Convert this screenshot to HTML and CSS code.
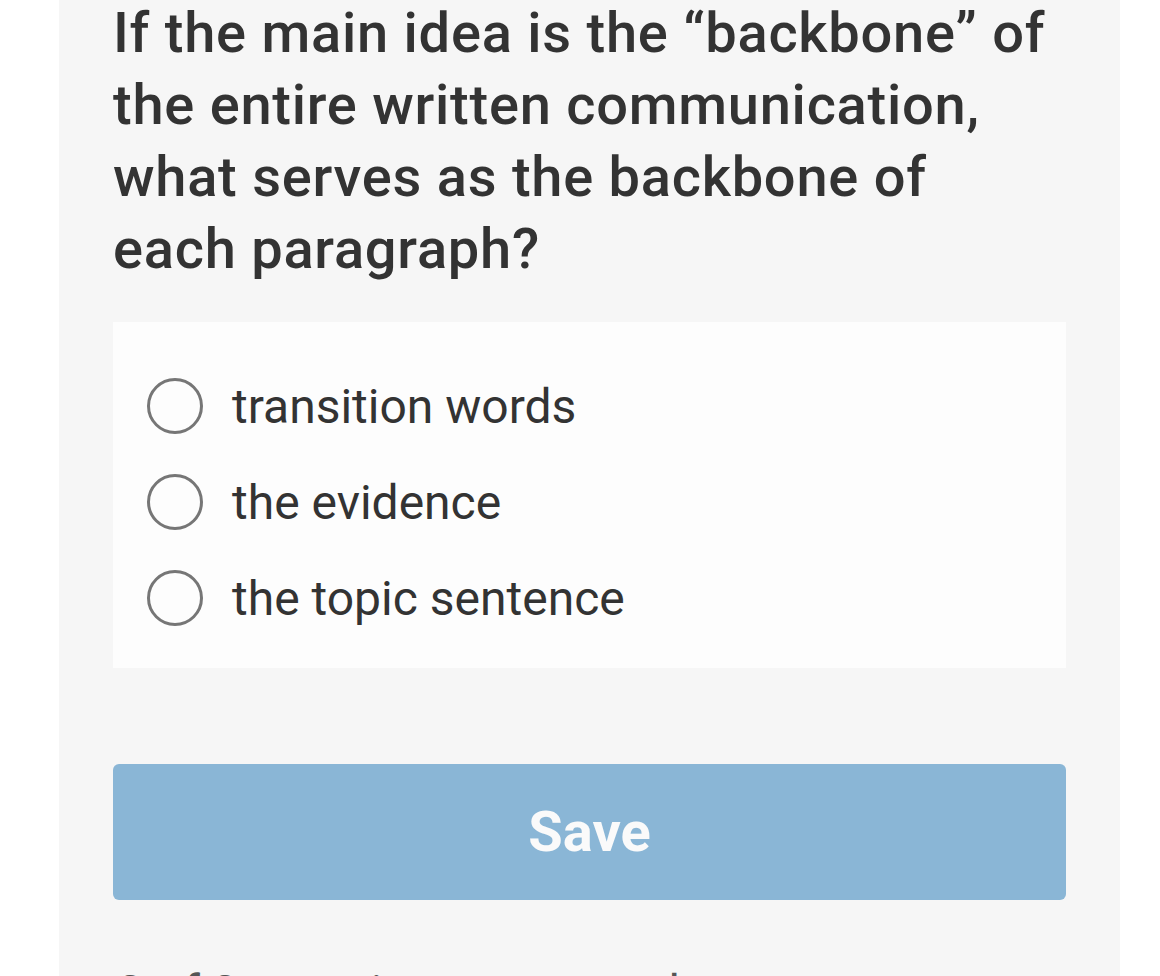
FILE: index.html
```html
<!DOCTYPE html>
<html lang="en">
<head>
<meta charset="utf-8">
<title>Question</title>
<link rel="stylesheet" href="styles.css">
</head>
<body>
<main class="panel">
  <h1 class="question">If the main idea is the “backbone” of the entire written communication, what serves as the backbone of each paragraph?</h1>
  <div class="options">
    <label class="option"><span class="radio"></span><span class="label">transition words</span></label>
    <label class="option"><span class="radio"></span><span class="label">the evidence</span></label>
    <label class="option"><span class="radio"></span><span class="label">the topic sentence</span></label>
  </div>
  <button class="save" type="button">Save</button>
  <p class="footer">3 of 3 questions answered</p>
</main>
</body>
</html>
```
FILE: styles.css
```css
html, body {
  margin: 0;
  padding: 0;
  background: #ffffff;
  overflow: hidden;
}
body {
  font-family: Roboto, "Liberation Sans", sans-serif;
  color: #333333;
}
.panel {
  margin-left: 59px;
  width: 1061px;
  min-height: 1100px;
  background: #f6f6f6;
  padding: 0 54px 0 54px;
  box-sizing: border-box;
  display: flex;
  flex-direction: column;
}
.question {
  margin: -3px 0 37px 0;
  padding-right: 12px;
  font-size: 56px;
  line-height: 72px;
  font-weight: 500;
  letter-spacing: 0.75px;
  color: #333333;
}
.options {
  background: #fdfdfd;
  padding: 36px 34px 22px 34px;
  display: flex;
  flex-direction: column;
}
.option {
  height: 96px;
  display: flex;
  align-items: center;
  gap: 29px;
}
.radio {
  width: 56px;
  height: 56px;
  box-sizing: border-box;
  border: 3px solid #767676;
  border-radius: 50%;
  flex: none;
}
.label {
  font-size: 48px;
  color: #333333;
}
.save {
  margin-top: 96px;
  height: 136px;
  border: none;
  border-radius: 6px;
  background: #8ab6d6;
  color: #fafafa;
  font-family: Roboto, "Liberation Sans", sans-serif;
  font-size: 56px;
  font-weight: 700;
  padding: 0;
}
.footer {
  margin: 64px 0 0 4px;
  font-size: 48px;
  color: #555555;
}
```
